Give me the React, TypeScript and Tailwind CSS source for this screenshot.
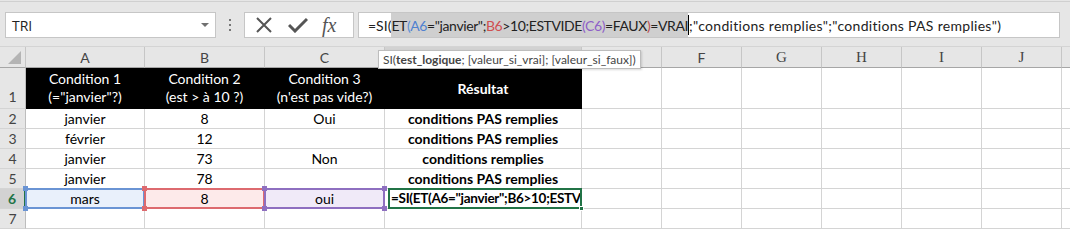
import React from "react";

// Columns widths measured from the screenshot
const COLS = ["A", "B", "C", "D", "E", "F", "G", "H", "I", "J"];

type Row = { a: string; b: string; c: string; d: string };

const ROWS: Row[] = [
  { a: "janvier", b: "8", c: "Oui", d: "conditions PAS remplies" },
  { a: "février", b: "12", c: "", d: "conditions PAS remplies" },
  { a: "janvier", b: "73", c: "Non", d: "conditions remplies" },
  { a: "janvier", b: "78", c: "", d: "conditions PAS remplies" },
];

const cell = "border-r border-b border-[#d4d4d4] flex items-center justify-center whitespace-nowrap overflow-hidden";
const rowHead = "bg-[#e6e6e6] border-r border-b border-r-[#bdbdbd] border-b-[#d4d4d4] flex items-center justify-center text-[#444]";

const NameBox = () => (
  <div className="ml-[5px] flex h-[26px] w-[211px] items-center justify-between border border-[#c6c6c6] bg-white pl-[6px] pr-[6px] font-['Open_Sans'] text-[14px] text-[#222]">
    <span>TRI</span>
    <span className="h-0 w-0 border-x-[4px] border-t-[4px] border-x-transparent border-t-[#707070]" />
  </div>
);

const Dots = () => (
  <div className="mx-[13px] flex flex-col gap-[3px]">
    <span className="h-[2px] w-[2px] bg-[#777]" />
    <span className="h-[2px] w-[2px] bg-[#777]" />
    <span className="h-[2px] w-[2px] bg-[#777]" />
  </div>
);

const FxButtons = () => (
  <div className="flex h-[26px] w-[110px] items-center border border-[#c6c6c6] bg-white pl-[10px] text-[#555]">
    <svg width="18" height="16" viewBox="0 0 18 16" className="mr-[15px]">
      <path d="M2 1 L16 15 M16 1 L2 15" stroke="#555" strokeWidth="2" fill="none" />
    </svg>
    <svg width="20" height="16" viewBox="0 0 20 16" className="mr-[14px]">
      <path d="M1 8 L7 14 L19 2" stroke="#555" strokeWidth="3" fill="none" />
    </svg>
    <span className="font-['Liberation_Serif'] text-[20px] italic leading-none text-[#555]">fx</span>
  </div>
);

const FormulaBar = () => (
  <div className="ml-[4px] flex h-[26px] w-[702px] items-center overflow-hidden border border-[#c6c6c6] bg-white pl-[9px] font-['Lato'] text-[14px] text-[#222] whitespace-nowrap">
    <span>=SI(</span>
    <span className="bg-[#cfcfcf] py-[3px] tracking-[-0.4px]">
      ET<span className="text-[#5b8fd8]">(</span>
      <span className="text-[#4f81d0]">A6</span>=&quot;janvier&quot;;
      <span className="text-[#d05050]">B6</span>&gt;10;ESTVIDE
      <span className="text-[#8e5fc8]">(C6)</span>=FAUX
      <span className="text-[#c05050]">)</span>=VRAI
    </span>
    <span className="h-[20px] w-px bg-black" />
    <span className="tracking-[0.3px]">;&quot;conditions remplies&quot;;&quot;conditions PAS remplies&quot;)</span>
  </div>
);

const Handle = ({ color, pos }: { color: string; pos: string }) => (
  <span className={`absolute z-20 h-[5px] w-[5px] ${color} ${pos}`} />
);

const RefCell = ({
  text,
  bg,
  border,
  handle,
}: {
  text: string;
  bg: string;
  border: string;
  handle: string;
}) => (
  <div className={`relative flex items-center justify-center whitespace-nowrap border-r border-b border-[#d4d4d4] ${bg}`}>
    <span className={`pointer-events-none absolute -inset-px z-10 border-2 ${border}`} />
    <Handle color={handle} pos="-left-[3px] -top-[3px]" />
    <Handle color={handle} pos="-left-[3px] -bottom-[3px]" />
    <Handle color={handle} pos="-right-[3px] -top-[3px]" />
    <Handle color={handle} pos="-right-[3px] -bottom-[3px]" />
    <span className="relative z-0">{text}</span>
  </div>
);

export default function App() {
  return (
    <div className="relative h-[229px] w-[1070px] overflow-hidden bg-white font-['Lato'] text-[14px] text-black">
      {/* top ribbon with name box and formula bar */}
      <div className="h-[47px] border-b border-[#d4d4d4] bg-[#e6e6e6]">
        <div className="h-[2px] border-b border-[#d0d0d0]" />
        <div className="mt-[10px] flex items-center">
          <NameBox />
          <Dots />
          <FxButtons />
          <FormulaBar />
        </div>
      </div>

      {/* sheet */}
      <div className="grid grid-cols-[26px_119px_120px_120px_197px_80px_80px_80px_80px_80px_80px_1fr] grid-rows-[21px_41px_repeat(6,20px)]">
        {/* column headers */}
        <div className="flex items-end justify-end border-r border-b border-r-[#c6c6c6] border-b-[#a6a6a6] bg-[#e6e6e6] pb-[3px] pr-[4px]">
          <svg width="13" height="13" viewBox="0 0 13 13">
            <path d="M13 0 L13 13 L0 13 Z" fill="#b4b4b4" />
          </svg>
        </div>
        {COLS.map((c) => (
          <div
            key={c}
            className={`flex items-center justify-center border-r border-b border-r-[#c6c6c6] ${
              c === "D" ? "bg-[#d2d2d2] border-b-2 border-b-[#217346] text-[#217346]" : "bg-[#e6e6e6] border-b-[#a6a6a6] text-[#444]"
            } ${["G", "H", "I", "J"].includes(c) ? "font-['Liberation_Serif'] text-[15px]" : ""}`}
          >
            {c}
          </div>
        ))}
        <div className="border-b border-b-[#a6a6a6] bg-[#e6e6e6]" />

        {/* row 1 */}
        <div className={`${rowHead} items-end pb-[1px]`}>1</div>
        <div className="flex flex-col items-center justify-center border-r border-b border-black bg-black leading-[18px] text-white">
          <span>Condition 1</span>
          <span>(=&quot;janvier&quot;?)</span>
        </div>
        <div className="flex flex-col items-center justify-center border-r border-b border-black bg-black leading-[18px] text-white">
          <span>Condition 2</span>
          <span>(est &gt; à 10 ?)</span>
        </div>
        <div className="flex flex-col items-center justify-center border-r border-b border-black bg-black leading-[18px] text-white">
          <span>Condition 3</span>
          <span>(n&apos;est pas vide?)</span>
        </div>
        <div className="flex items-center justify-center border-r border-b border-black bg-black font-bold text-white">
          Résultat
        </div>
        {Array.from({ length: 7 }).map((_, i) => (
          <div key={i} className={i === 6 ? "border-b border-[#d4d4d4]" : cell} />
        ))}

        {/* rows 2-5 */}
        {ROWS.map((r, i) => (
          <React.Fragment key={i}>
            <div className={rowHead}>{i + 2}</div>
            <div className={cell}>{r.a}</div>
            <div className={cell}>{r.b}</div>
            <div className={cell}>{r.c}</div>
            <div className={`${cell} font-bold`}>{r.d}</div>
            {Array.from({ length: 7 }).map((_, j) => (
              <div key={j} className={j === 6 ? "border-b border-[#d4d4d4]" : cell} />
            ))}
          </React.Fragment>
        ))}

        {/* row 6: the row being edited */}
        <div className="flex items-center justify-center border-b border-r-2 border-b-[#d4d4d4] border-r-[#217346] bg-[#d2d2d2] font-bold text-[#217346]">
          6
        </div>
        <RefCell text="mars" bg="bg-[#e9f0fb]" border="border-[#6a94d4]" handle="bg-[#6a94d4]" />
        <RefCell text="8" bg="bg-[#fdeaea]" border="border-[#dd6a6f]" handle="bg-[#dd6a6f]" />
        <RefCell text="oui" bg="bg-[#f0eaf8]" border="border-[#8e6fc0]" handle="bg-[#8e6fc0]" />
        <div className="relative border-r border-b border-[#d4d4d4]">
          <span className="pointer-events-none absolute -top-px bottom-[-1px] left-[3px] right-[-1px] z-10 border-2 border-[#217346]" />
          <span className="absolute -bottom-[3px] -right-[3px] z-20 h-[5px] w-[5px] border border-white bg-[#217346]" />
          <div className="flex h-full items-center overflow-hidden whitespace-nowrap pl-[6px] text-[13.5px] font-bold tracking-[-0.3px]">
            =SI(ET(A6=&quot;janvier&quot;;B6&gt;10;ESTVIDE(C6)=FAUX)=VRAI;
          </div>
        </div>
        {Array.from({ length: 7 }).map((_, j) => (
          <div key={j} className={j === 6 ? "border-b border-[#d4d4d4]" : cell} />
        ))}

        {/* row 7 */}
        <div className={rowHead}>7</div>
        {Array.from({ length: 11 }).map((_, j) => (
          <div key={j} className={j === 10 ? "border-b border-[#d4d4d4]" : cell} />
        ))}
      </div>

      {/* function argument tooltip */}
      <div className="absolute left-[378px] top-[50px] flex h-[19px] items-center border border-[#bdbdbd] bg-white px-[4px] font-['Lato'] text-[12px] text-[#444] shadow-[1px_1px_2px_rgba(0,0,0,0.15)] whitespace-nowrap">
        SI(<span className="font-bold">test_logique</span>; [valeur_si_vrai]; [valeur_si_faux])
      </div>
    </div>
  );
}
